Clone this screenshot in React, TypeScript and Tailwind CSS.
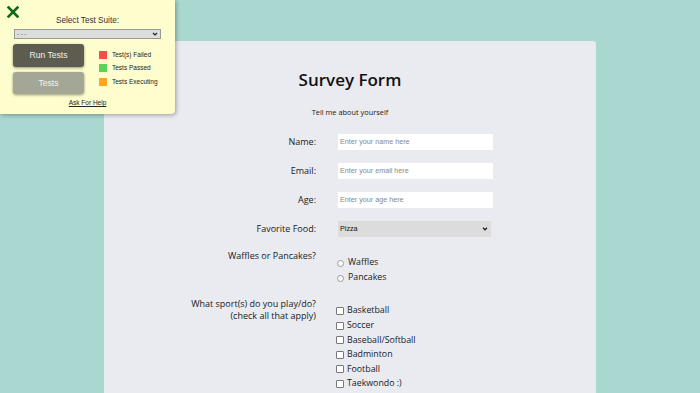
import React from "react";

const sports = ["Basketball", "Soccer", "Baseball/Softball", "Badminton", "Football", "Taekwondo :)"];

function Row({ label, children }: { label: React.ReactNode; children: React.ReactNode }) {
  return (
    <div className="flex items-center h-[16px]">
      <div className="w-[212px] text-right text-[9px] text-[#1a1a1a]">{label}</div>
      <div className="ml-[22px]">{children}</div>
    </div>
  );
}

const arial = { fontFamily: "'Liberation Sans', Arial, sans-serif" };

export default function App() {
  return (
    <div className="relative w-[700px] h-[393px] overflow-hidden bg-[#a8d8d0]" style={{ fontFamily: "'Open Sans', sans-serif" }}>
      <div className="mx-auto mt-[41px] w-[492px] h-[400px] rounded-t-[3px] bg-[#e9ebf0] flex flex-col">
        <h1 className="mt-[28px] text-center text-[17px] font-semibold text-[#111] leading-[22px]">Survey Form</h1>
        <p className="mt-[16px] text-center text-[7.4px] text-[#1a1a1a] leading-[10px]">Tell me about yourself</p>
        <div className="mt-[17px] flex flex-col gap-[13px]">
          <Row label="Name:">
            <div className="w-[155px] h-[16px] bg-white flex items-center px-[2px] text-[7.2px] text-[#888]" style={arial}>Enter your name here</div>
          </Row>
          <Row label="Email:">
            <div className="w-[155px] h-[16px] bg-white flex items-center px-[2px] text-[7.2px] text-[#888]" style={arial}>Enter your email here</div>
          </Row>
          <Row label="Age:">
            <div className="w-[155px] h-[16px] bg-white flex items-center px-[2px] text-[7.2px] text-[#888]" style={arial}>Enter your age here</div>
          </Row>
          <Row label="Favorite Food:">
            <div className="w-[153px] h-[16px] bg-[#dcdcdc] flex items-center justify-between pl-[2px] pr-[3px] text-[7.2px] text-[#111]" style={arial}>
              <span>Pizza</span>
              <svg width="6" height="4" viewBox="0 0 6 4"><path d="M1 0.8l2 2 2-2" stroke="#222" strokeWidth="1.3" fill="none" /></svg>
            </div>
          </Row>
        </div>
        <div className="mt-[12px] flex">
          <div className="w-[212px] text-right text-[9px] text-[#1a1a1a] leading-[14px]">Waffles or Pancakes?</div>
          <div className="ml-[22px] pt-[7px] flex flex-col gap-[1px]">
            {["Waffles", "Pancakes"].map((t) => (
              <div key={t} className="flex items-center h-[14px] text-[8.8px] text-[#1a1a1a]">
                <span className="ml-[-1px] w-[7px] h-[7px] rounded-full border border-[#999] bg-white" />
                <span className="ml-[4px]">{t}</span>
              </div>
            ))}
          </div>
        </div>
        <div className="mt-[13px] flex">
          <div className="w-[212px] text-right text-[9px] text-[#1a1a1a] leading-[12px]">
            What sport(s) do you play/do?
            <br />
            (check all that apply)
          </div>
          <div className="ml-[22px] pt-[6px] flex flex-col gap-[0.6px]">
            {sports.map((t) => (
              <div key={t} className="flex items-center h-[14px] text-[8.8px] text-[#1a1a1a]">
                <span className="ml-[-2px] w-[8px] h-[8px] rounded-[1px] border border-[#777] bg-white" />
                <span className="ml-[3px]">{t}</span>
              </div>
            ))}
          </div>
        </div>
      </div>

      <div className="absolute left-0 top-0 w-[175px] h-[114px] bg-[#fdfdce] rounded-br-[4px] shadow-[1px_1px_4px_rgba(0,0,0,0.35)]" style={arial}>
        <svg className="absolute left-[7px] top-[6px]" width="12" height="12" viewBox="0 0 12 12">
          <path d="M1.5 1.5l9 9M10.5 1.5l-9 9" stroke="#0b6b18" strokeWidth="2.6" strokeLinecap="square" />
        </svg>
        <div className="pt-[15px] text-center text-[8.2px] text-[#333] leading-[11px]">Select Test Suite:</div>
        <div className="mx-[14px] mt-[3px] h-[10px] w-[147px] bg-[#dddddd] border border-[#999] flex items-center justify-between px-[2px] text-[6px] text-[#333]">
          <span>- - -</span>
          <svg width="6" height="4" viewBox="0 0 6 4"><path d="M1 1l2 2 2-2" stroke="#222" strokeWidth="1.2" fill="none" /></svg>
        </div>
        <div className="flex mt-[5px] ml-[13px]">
          <div className="flex flex-col gap-[5px]">
            <div className="w-[71px] h-[23px] rounded-[3px] bg-[#5c5d50] text-[#f0f0f0] text-[8.6px] flex items-center justify-center shadow-[0_1px_3px_rgba(0,0,0,0.4)]">Run Tests</div>
            <div className="w-[71px] h-[22px] rounded-[3px] bg-[#a4a696] text-[#f4f4f4] text-[8.6px] flex items-center justify-center shadow-[0_1px_3px_rgba(0,0,0,0.4)]">Tests</div>
          </div>
          <div className="ml-[15px] pt-[6px] flex flex-col gap-[4.5px]">
            {[
              ["#ff4a4a", "Test(s) Failed"],
              ["#5ad25a", "Tests Passed"],
              ["#ffa51e", "Tests Executing"],
            ].map(([c, t]) => (
              <div key={t} className="flex items-center h-[9px] text-[6.5px] text-[#222]">
                <span className="w-[8px] h-[8px]" style={{ background: c }} />
                <span className="ml-[5px]">{t}</span>
              </div>
            ))}
          </div>
        </div>
        <div className="mt-[4px] text-center text-[6.5px] underline text-[#222]">Ask For Help</div>
      </div>
    </div>
  );
}
